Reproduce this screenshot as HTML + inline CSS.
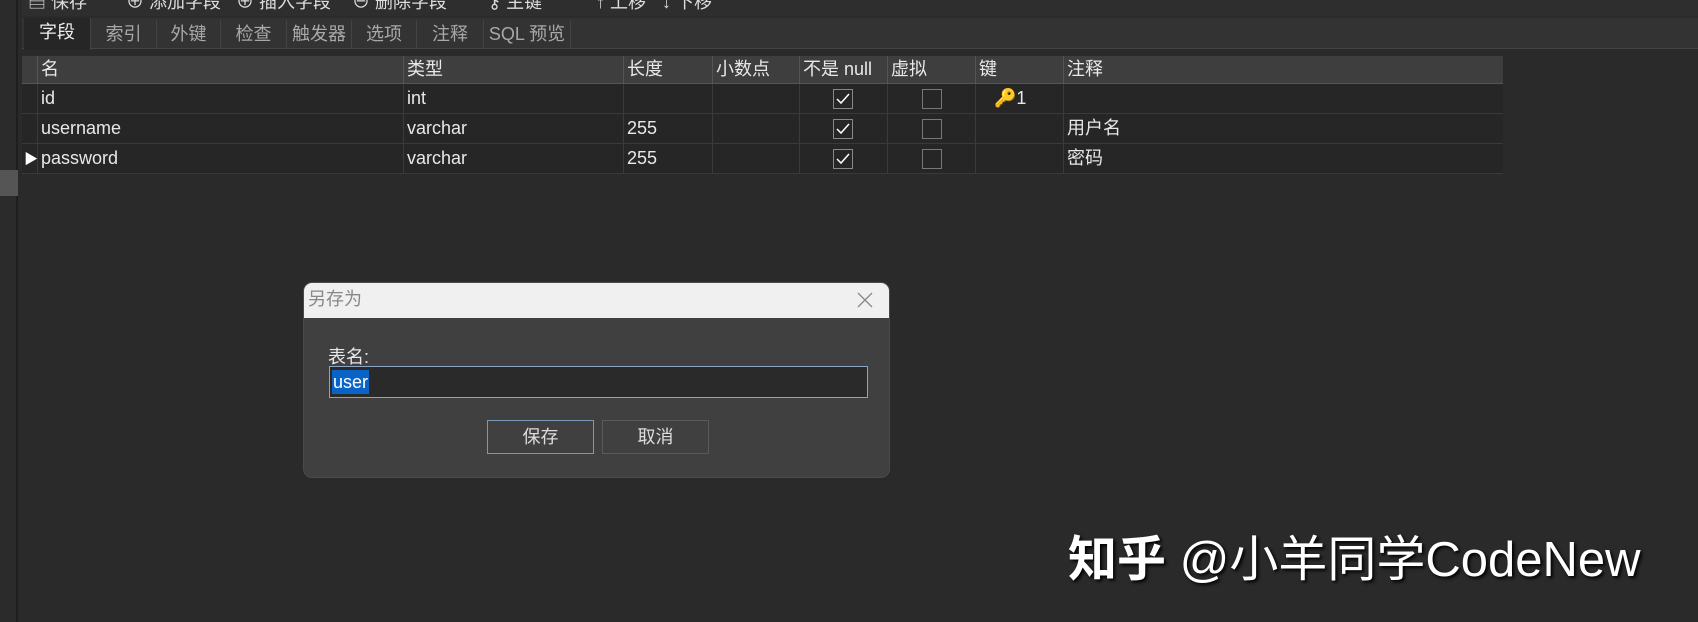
<!DOCTYPE html>
<html><head><meta charset="utf-8"><style>
*{margin:0;padding:0;box-sizing:border-box}
body{width:1698px;height:622px;background:#2a2a2a;font-family:"Liberation Sans","Noto Sans CJK SC",sans-serif;color:#e8e8e8;position:relative;overflow:hidden;font-size:18px}
.abs{position:absolute}
.left{left:0;top:0;width:18px;height:622px;background:#2b2b2b;border-right:2px solid #1e1e1e}
.tb{top:0;left:22px;height:16px;width:1676px;background:#2e2e2e;font-size:18px;color:#ddd}
.tb span{position:absolute;top:-12px}
.tabs{top:18px;left:22px;width:1676px;height:31px;background:#333;border-bottom:1px solid #444}
.tab{position:absolute;top:2px;height:29px;border-right:1px solid #444;color:#a8a8a8;font-size:18px;text-align:center;line-height:29px}
.tab.a{background:#262626;color:#eee;top:0;height:32px}
.grid{left:22px;top:56px;width:1481px}
.row{position:relative;height:30px;border-bottom:1px solid #3a3a3a;background:#262626}
.row.h{height:28px;background:#3e3e3e;border-bottom:1px solid #555}
.c{position:absolute;top:0;height:100%;border-left:1px solid #3a3a3a;padding-left:3px;line-height:29px;font-size:18px;white-space:nowrap}
.h .c{border-left:1px solid #555;line-height:27px}
.cb{position:absolute;left:50%;top:50%;width:20px;height:20px;margin:-10px 0 0 -10px;border:1px solid #777}
.dlg{left:303px;top:282px;width:587px;height:196px;background:#404040;border-radius:9px;overflow:hidden;border:1px solid #4a4a4a}
.title{height:35px;background:#f0f0f0;color:#888;font-size:18px;line-height:33px;padding-left:4px}
.btn{position:absolute;top:137px;height:34px;width:107px;border:1px solid #5a5a5a;text-align:center;line-height:32px;font-size:18px;color:#ddd;background:#404040}
</style></head><body>
<div class="abs left"></div>
<div class="abs" style="left:0;top:170px;width:18px;height:26px;background:#555"></div>
<div class="abs tb">
<span style="left:6px">▤ 保存</span><span style="left:104px">⊕ 添加字段</span><span style="left:214px">⊕ 插入字段</span><span style="left:330px">⊖ 删除字段</span><span style="left:466px">⚷ 主键</span><span style="left:574px">↑ 上移</span><span style="left:640px">↓ 下移</span>
</div>
<div class="abs tabs">
<div class="tab a" style="left:2px;width:67px">字段</div>
<div class="tab" style="left:69px;width:66px">索引</div>
<div class="tab" style="left:135px;width:64px">外键</div>
<div class="tab" style="left:199px;width:66px">检查</div>
<div class="tab" style="left:265px;width:65px">触发器</div>
<div class="tab" style="left:330px;width:65px">选项</div>
<div class="tab" style="left:395px;width:67px">注释</div>
<div class="tab" style="left:462px;width:87px">SQL 预览</div>
</div>
<div class="abs grid">
<div class="row h"><div class="c" style="left:15px;width:366px">名</div><div class="c" style="left:381px;width:220px">类型</div><div class="c" style="left:601px">长度</div><div class="c" style="left:690px">小数点</div><div class="c" style="left:777px">不是 null</div><div class="c" style="left:865px">虚拟</div><div class="c" style="left:953px">键</div><div class="c" style="left:1041px">注释</div></div>
<div class="row"><div class="c" style="left:15px">id</div><div class="c" style="left:381px">int</div><div class="c" style="left:601px"></div><div class="c" style="left:690px"></div><div class="c" style="left:777px;width:88px"></div><div class="c" style="left:865px;width:88px"><div class="cb"></div></div><div class="c" style="left:953px;width:88px;padding-left:18px"><span style="color:#f0a000">🔑</span>1</div><div class="c" style="left:1041px"></div></div>
<div class="row"><div class="c" style="left:15px">username</div><div class="c" style="left:381px">varchar</div><div class="c" style="left:601px">255</div><div class="c" style="left:690px"></div><div class="c" style="left:777px;width:88px"></div><div class="c" style="left:865px;width:88px"><div class="cb"></div></div><div class="c" style="left:953px"></div><div class="c" style="left:1041px">用户名</div></div>
<div class="row"><span class="abs" style="left:2px;top:5px;font-size:14px;color:#fff">▶</span><div class="c" style="left:15px">password</div><div class="c" style="left:381px">varchar</div><div class="c" style="left:601px">255</div><div class="c" style="left:690px"></div><div class="c" style="left:777px;width:88px"></div><div class="c" style="left:865px;width:88px"><div class="cb"></div></div><div class="c" style="left:953px"></div><div class="c" style="left:1041px">密码</div></div>
</div>
<div class="abs" style="left:799px;top:84px;width:88px;height:90px">
<svg class="abs" style="left:34px;top:5px" width="20" height="20"><rect x="0.5" y="0.5" width="19" height="19" fill="none" stroke="#888"/><path d="M4 10 L8 14 L16 5" fill="none" stroke="#fff" stroke-width="1.5"/></svg>
<svg class="abs" style="left:34px;top:35px" width="20" height="20"><rect x="0.5" y="0.5" width="19" height="19" fill="none" stroke="#888"/><path d="M4 10 L8 14 L16 5" fill="none" stroke="#fff" stroke-width="1.5"/></svg>
<svg class="abs" style="left:34px;top:65px" width="20" height="20"><rect x="0.5" y="0.5" width="19" height="19" fill="none" stroke="#888"/><path d="M4 10 L8 14 L16 5" fill="none" stroke="#fff" stroke-width="1.5"/></svg>
</div>
<div class="abs dlg">
<div class="title">另存为<svg style="position:absolute;right:16px;top:9px" width="16" height="16"><path d="M1 1L15 15M15 1L1 15" stroke="#888" stroke-width="1.3"/></svg></div>
<div class="abs" style="left:24px;top:60px;font-size:18px">表名:</div>
<div class="abs" style="left:25px;top:83px;width:539px;height:32px;background:#2a2a2a;border:1px solid #8aa6c4"><span style="position:absolute;left:2px;top:3px;background:#0a64c8;color:#fff;line-height:24px;padding:0 1px">user</span></div>
<div class="btn" style="left:183px;border-color:#7a98b8">保存</div>
<div class="btn" style="left:298px">取消</div>
</div>
<div class="abs" style="left:1068px;top:520px;font-size:49px;font-weight:bold;color:#fff;text-shadow:2px 2px 3px #000;white-space:nowrap">知乎 <span style="font-weight:normal">@小羊同学CodeNew</span></div>
</body></html>
